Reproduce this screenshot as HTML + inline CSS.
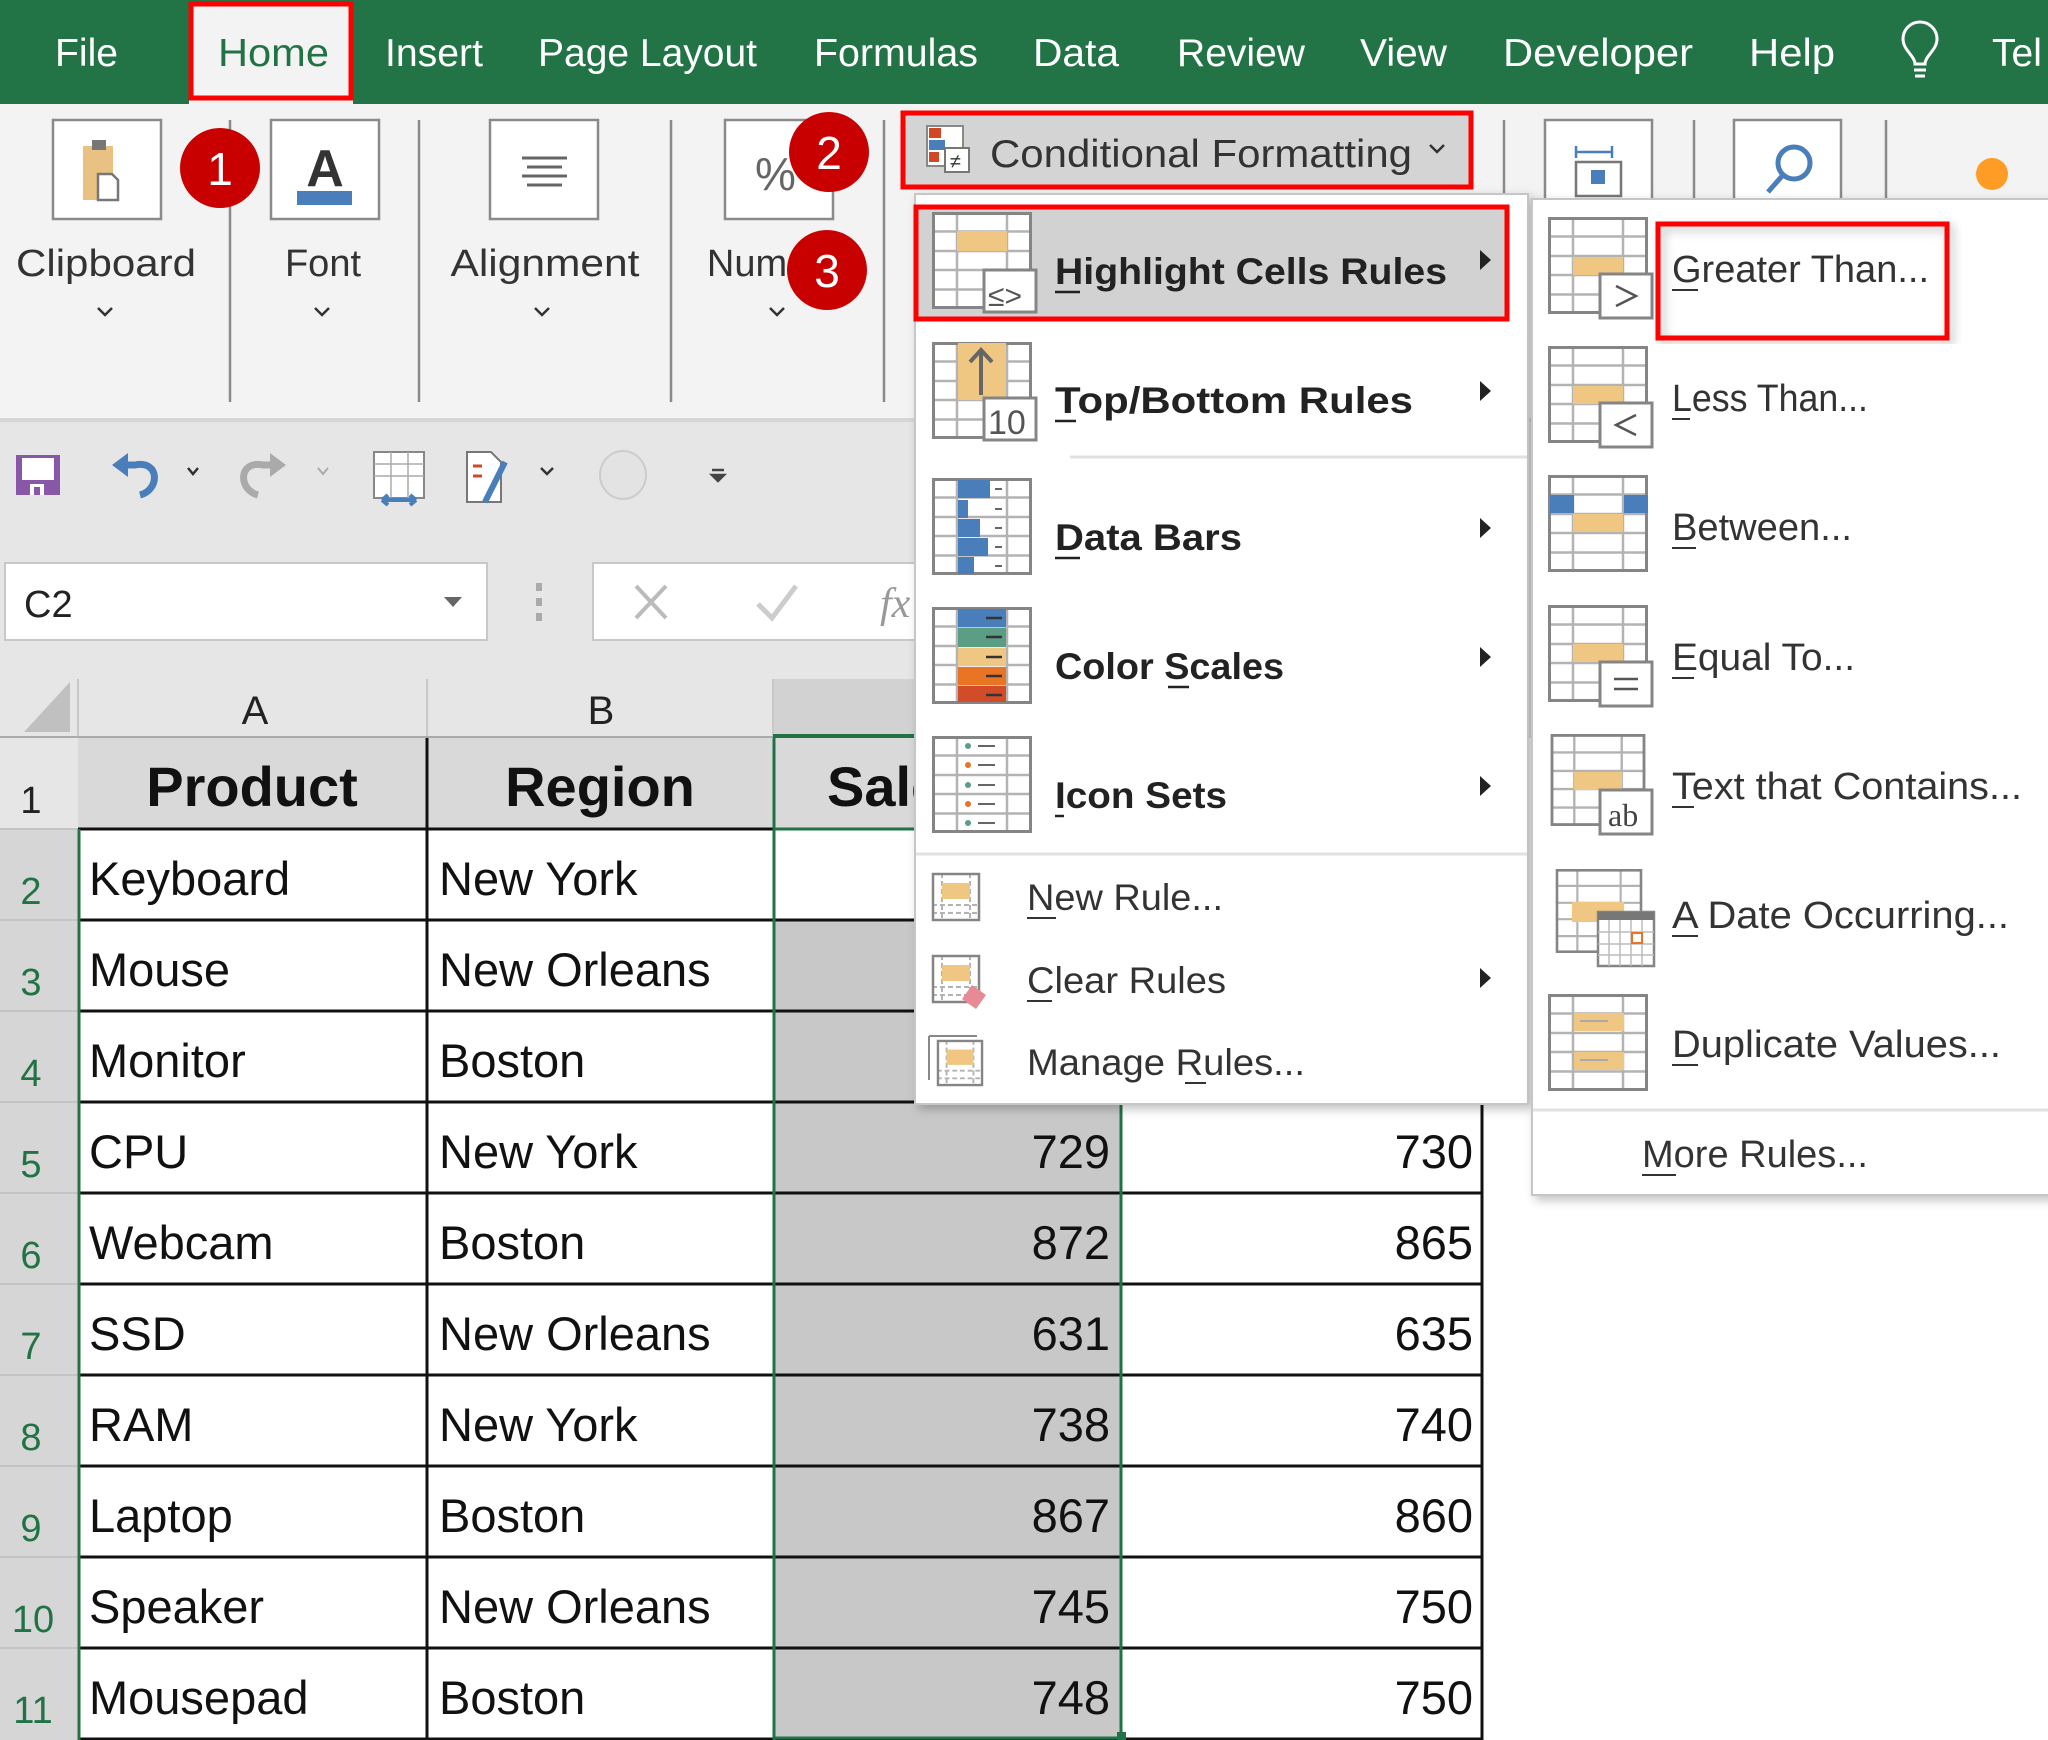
<!DOCTYPE html>
<html><head><meta charset="utf-8"><style>
html,body{margin:0;padding:0;background:#fff;}
svg{display:block;font-family:"Liberation Sans",Arial,sans-serif;}
</style></head><body>
<svg width="2048" height="1740" viewBox="0 0 2048 1740" xmlns="http://www.w3.org/2000/svg">
<defs>
<symbol id="g" viewBox="0 0 100 97" overflow="visible">
<rect x="0" y="0" width="100" height="97" fill="#fff"/>
<g stroke="#b3b3b3" stroke-width="2.5"><line x1="25" y1="0" x2="25" y2="97"/><line x1="75" y1="0" x2="75" y2="97"/><line x1="0" y1="19.5" x2="100" y2="19.5"/><line x1="0" y1="39" x2="100" y2="39"/><line x1="0" y1="58" x2="100" y2="58"/><line x1="0" y1="77.5" x2="100" y2="77.5"/></g>
<rect x="1.5" y="1.5" width="97" height="94" fill="none" stroke="#858585" stroke-width="3"/>
</symbol>
<symbol id="sg" viewBox="0 0 48 48" overflow="visible">
<rect x="0" y="0" width="48" height="48" fill="#fff"/>
<g stroke="#b3b3b3" stroke-width="2" stroke-dasharray="5 3"><line x1="10" y1="0" x2="10" y2="48"/><line x1="38" y1="0" x2="38" y2="48"/><line x1="0" y1="32" x2="48" y2="32"/><line x1="0" y1="40" x2="48" y2="40"/></g>
<rect x="1" y="1" width="46" height="46" fill="none" stroke="#858585" stroke-width="2.5"/>
<rect x="10" y="10" width="28" height="16" fill="#efc783"/>
</symbol>
<filter id="sh" x="-5%" y="-5%" width="110%" height="110%"><feDropShadow dx="4" dy="4" stdDeviation="5" flood-color="#000" flood-opacity="0.25"/></filter>
</defs>

<rect x="0" y="0" width="2048" height="104" fill="#227447"/>
<rect x="189" y="3" width="164" height="101" fill="#f3f3f3"/>
<rect x="191" y="4" width="160" height="94" fill="none" stroke="#ff0000" stroke-width="5"/>
<g fill="#fff" font-size="39">
<text x="55" y="66" textLength="63" lengthAdjust="spacingAndGlyphs">File</text>
<text x="218" y="66" fill="#217346" textLength="111" lengthAdjust="spacingAndGlyphs">Home</text>
<text x="385" y="66" textLength="98" lengthAdjust="spacingAndGlyphs">Insert</text>
<text x="538" y="66" textLength="219" lengthAdjust="spacingAndGlyphs">Page Layout</text>
<text x="814" y="66" textLength="164" lengthAdjust="spacingAndGlyphs">Formulas</text>
<text x="1033" y="66" textLength="86" lengthAdjust="spacingAndGlyphs">Data</text>
<text x="1177" y="66" textLength="128" lengthAdjust="spacingAndGlyphs">Review</text>
<text x="1360" y="66" textLength="87" lengthAdjust="spacingAndGlyphs">View</text>
<text x="1503" y="66" textLength="190" lengthAdjust="spacingAndGlyphs">Developer</text>
<text x="1749" y="66" textLength="86" lengthAdjust="spacingAndGlyphs">Help</text>
<text x="1992" y="66">Tel</text>
</g>
<g fill="none" stroke="#fff" stroke-width="3">
<path d="M1915 64 C1915 56 1903 50 1903 39 A17 17 0 1 1 1937 39 C1937 50 1925 56 1925 64 Z"/>
<line x1="1914" y1="70" x2="1926" y2="70"/><line x1="1915" y1="76" x2="1925" y2="76"/>
</g>

<rect x="0" y="104" width="2048" height="314" fill="#f3f3f3"/>
<g fill="#fff" stroke="#8a8a8a" stroke-width="2.5">
<rect x="53" y="120" width="108" height="99"/>
<rect x="271" y="120" width="108" height="99"/>
<rect x="490" y="120" width="108" height="99"/>
<rect x="725" y="120" width="108" height="99"/>
<rect x="1545" y="120" width="107" height="90"/>
<rect x="1734" y="120" width="107" height="90"/>
</g>
<rect x="83" y="146" width="30" height="54" fill="#e9c283"/>
<rect x="92" y="140" width="14" height="10" fill="#777"/>
<path d="M98 174 h14 l6 6 v20 h-20z" fill="#fff" stroke="#777" stroke-width="2.5"/>
<text x="325" y="186" font-size="52" font-weight="bold" text-anchor="middle" fill="#333">A</text>
<rect x="297" y="191" width="55" height="14" fill="#4a7ebb"/>
<g stroke="#666" stroke-width="3"><line x1="522" y1="158" x2="567" y2="158"/><line x1="527" y1="167" x2="562" y2="167"/><line x1="522" y1="176" x2="567" y2="176"/><line x1="527" y1="185" x2="562" y2="185"/></g>
<text x="755" y="190" font-size="46" fill="#666">%</text>
<g fill="#333" font-size="38" text-anchor="middle">
<text x="106" y="276" textLength="180" lengthAdjust="spacingAndGlyphs">Clipboard</text>
<text x="323" y="276">Font</text>
<text x="545" y="276" textLength="189" lengthAdjust="spacingAndGlyphs">Alignment</text>
<text x="747" y="276">Num</text>
</g>
<g fill="none" stroke="#333" stroke-width="2.5"><path d="M98 308l7 7 7-7"/><path d="M315 308l7 7 7-7"/><path d="M535 308l7 7 7-7"/><path d="M770 308l7 7 7-7"/></g>
<g stroke="#8a8a8a" stroke-width="2.5"><line x1="230" y1="120" x2="230" y2="402"/><line x1="419" y1="120" x2="419" y2="402"/><line x1="671" y1="120" x2="671" y2="402"/><line x1="884" y1="120" x2="884" y2="402"/><line x1="1504" y1="120" x2="1504" y2="210"/><line x1="1694" y1="120" x2="1694" y2="210"/><line x1="1886" y1="120" x2="1886" y2="210"/></g>
<g stroke="#4a7ebb" stroke-width="2.5"><line x1="1576" y1="152" x2="1612" y2="152"/><line x1="1576" y1="146" x2="1576" y2="158"/><line x1="1612" y1="146" x2="1612" y2="158"/></g>
<rect x="1576" y="162" width="45" height="34" fill="#fff" stroke="#777" stroke-width="2.5"/>
<rect x="1591" y="170" width="14" height="14" fill="#4a7ebb"/>
<circle cx="1794" cy="163" r="16" fill="none" stroke="#4a7ebb" stroke-width="5"/>
<line x1="1783" y1="175" x2="1768" y2="192" stroke="#4a7ebb" stroke-width="5"/>
<circle cx="1992" cy="174" r="16" fill="#ff8c00" opacity="0.85"/>

<rect x="904" y="114" width="566" height="72" fill="#d4d4d4"/>
<rect x="903" y="113" width="568" height="74" fill="none" stroke="#ff0000" stroke-width="5"/>
<g transform="translate(927,126)"><rect x="0" y="0" width="36" height="40" fill="#fff" stroke="#888" stroke-width="2"/><rect x="2" y="2" width="12" height="10" fill="#d24726"/><rect x="2" y="14" width="16" height="10" fill="#4a7ebb"/><rect x="2" y="26" width="10" height="10" fill="#d24726"/><rect x="18" y="22" width="24" height="24" fill="#fff" stroke="#777" stroke-width="2"/><text x="23" y="42" font-size="20" fill="#333">≠</text></g>
<text x="990" y="167" font-size="39" fill="#333" textLength="422" lengthAdjust="spacingAndGlyphs">Conditional Formatting</text>
<path d="M1430 145l7 7 7-7" fill="none" stroke="#333" stroke-width="2.5"/>

<rect x="0" y="418" width="2048" height="262" fill="#e6e6e6"/>
<rect x="0" y="418" width="2048" height="4" fill="#d6d6d6"/>
<rect x="16" y="455" width="44" height="40" fill="#8857a8"/><rect x="22" y="458" width="32" height="22" fill="#fff"/><rect x="30" y="484" width="14" height="11" fill="#fff"/><rect x="34" y="487" width="6" height="8" fill="#8857a8"/>
<path d="M140 495 C160 490 160 460 135 465 L122 465" fill="none" stroke="#4a7ebb" stroke-width="7"/><path d="M112 465 l16 -12 v24z" fill="#4a7ebb"/>
<path d="M188 468l5 6 5-6" fill="none" stroke="#333" stroke-width="2.5"/>
<path d="M258 495 C238 490 238 460 263 465 L276 465" fill="none" stroke="#aaa" stroke-width="7"/><path d="M286 465 l-16 -12 v24z" fill="#aaa"/>
<path d="M318 468l5 6 5-6" fill="none" stroke="#aaa" stroke-width="2"/>
<rect x="374" y="452" width="50" height="46" fill="#fff" stroke="#888" stroke-width="2"/>
<g stroke="#aaa" stroke-width="1.5"><line x1="374" y1="464" x2="424" y2="464"/><line x1="374" y1="476" x2="424" y2="476"/><line x1="391" y1="452" x2="391" y2="498"/><line x1="408" y1="452" x2="408" y2="498"/></g>
<path d="M382 500 h34 M382 500 l6 -5 M382 500 l6 5 M416 500 l-6 -5 M416 500 l-6 5" stroke="#4a7ebb" stroke-width="4" fill="none"/>
<path d="M467 452 h24 l10 10 v40 h-34z" fill="#fff" stroke="#777" stroke-width="2"/>
<g stroke="#d24726" stroke-width="3"><line x1="473" y1="466" x2="482" y2="466"/><line x1="473" y1="476" x2="482" y2="476"/></g>
<line x1="505" y1="462" x2="485" y2="502" stroke="#4a7ebb" stroke-width="6"/>
<path d="M541 468l6 6 6-6" fill="none" stroke="#333" stroke-width="2.5"/>
<ellipse cx="623" cy="475" rx="23" ry="24" fill="#e3e3e3" stroke="#ccc" stroke-width="2"/>
<path d="M712 470h12M712 475l6 6 6-6z" stroke="#444" stroke-width="2.5" fill="#444"/>

<rect x="5" y="563" width="482" height="77" fill="#fff" stroke="#c8c8c8" stroke-width="2"/>
<text x="24" y="617" font-size="38" fill="#222">C2</text>
<path d="M444 597h18l-9 10z" fill="#666"/>
<g fill="#aaa"><rect x="536" y="583" width="6" height="8"/><rect x="536" y="598" width="6" height="8"/><rect x="536" y="613" width="6" height="8"/></g>
<rect x="593" y="563" width="400" height="77" fill="#fff" stroke="#c8c8c8" stroke-width="2"/>
<path d="M636 586l30 32M666 586l-30 32" stroke="#bbb" stroke-width="4"/>
<path d="M758 604l14 14 24-32" fill="none" stroke="#ccc" stroke-width="5"/>
<text x="880" y="617" font-size="42" font-style="italic" font-family="Liberation Serif,serif" fill="#999">fx</text>

<rect x="0" y="679" width="2048" height="59" fill="#e6e6e6"/>
<rect x="773" y="679" width="350" height="59" fill="#d2d2d2"/>
<path d="M70 682 v50 h-46z" fill="#c0c0c0"/>
<g stroke="#c8c8c8" stroke-width="2"><line x1="78" y1="679" x2="78" y2="738"/><line x1="427" y1="679" x2="427" y2="738"/><line x1="773" y1="679" x2="773" y2="738"/></g>
<g font-size="40" fill="#222" text-anchor="middle"><text x="255" y="724">A</text><text x="601" y="724">B</text></g>
<rect x="773" y="734" width="350" height="5" fill="#217346"/>
<rect x="0" y="736" width="773" height="3" fill="#aaa"/>

<rect x="0" y="738" width="78" height="1002" fill="#e6e6e6"/>
<rect x="0" y="829" width="78" height="911" fill="#d6d6d6"/>
<g stroke="#c4c4c4" stroke-width="2">
<line x1="0" y1="829" x2="78" y2="829"/><line x1="0" y1="920" x2="78" y2="920"/><line x1="0" y1="1011" x2="78" y2="1011"/><line x1="0" y1="1102" x2="78" y2="1102"/><line x1="0" y1="1193" x2="78" y2="1193"/><line x1="0" y1="1284" x2="78" y2="1284"/><line x1="0" y1="1375" x2="78" y2="1375"/><line x1="0" y1="1466" x2="78" y2="1466"/><line x1="0" y1="1557" x2="78" y2="1557"/><line x1="0" y1="1648" x2="78" y2="1648"/>
</g>
<g font-size="38" text-anchor="middle" fill="#217346">
<text x="31" y="813" fill="#222">1</text>
<text x="31" y="904">2</text><text x="31" y="995">3</text><text x="31" y="1086">4</text><text x="31" y="1177">5</text><text x="31" y="1268">6</text><text x="31" y="1359">7</text><text x="31" y="1450">8</text><text x="31" y="1541">9</text><text x="33" y="1632">10</text><text x="33" y="1723">11</text>
</g>

<rect x="78" y="738" width="1045" height="91" fill="#d9d9d9"/>
<rect x="78" y="829" width="1404" height="911" fill="#fff"/>
<rect x="775" y="920" width="346" height="820" fill="#c8c8c8"/>
<g stroke="#111" stroke-width="3">
<line x1="78" y1="829" x2="1482" y2="829"/><line x1="78" y1="920" x2="1482" y2="920"/><line x1="78" y1="1011" x2="1482" y2="1011"/><line x1="78" y1="1102" x2="1482" y2="1102"/><line x1="78" y1="1193" x2="1482" y2="1193"/><line x1="78" y1="1284" x2="1482" y2="1284"/><line x1="78" y1="1375" x2="1482" y2="1375"/><line x1="78" y1="1466" x2="1482" y2="1466"/><line x1="78" y1="1557" x2="1482" y2="1557"/><line x1="78" y1="1648" x2="1482" y2="1648"/><line x1="78" y1="1739" x2="1482" y2="1739"/>
<line x1="427" y1="738" x2="427" y2="1740"/><line x1="1482" y1="829" x2="1482" y2="1740"/>
</g>
<g stroke="#217346" stroke-width="3"><line x1="79" y1="829" x2="79" y2="1740"/><line x1="774" y1="738" x2="774" y2="1740"/><line x1="1121" y1="829" x2="1121" y2="1740"/><line x1="773" y1="829" x2="1123" y2="829"/><line x1="773" y1="1738" x2="1123" y2="1738"/></g>
<rect x="1117" y="1732" width="9" height="8" fill="#217346"/>
<g font-size="56" font-weight="bold" fill="#111" text-anchor="middle"><text x="252" y="806">Product</text><text x="600" y="806">Region</text></g>
<text x="827" y="806" font-size="56" font-weight="bold" fill="#111">Sales</text>
<g font-size="47" fill="#111">
<text x="89" y="895">Keyboard</text><text x="439" y="895">New York</text>
<text x="89" y="986">Mouse</text><text x="439" y="986">New Orleans</text>
<text x="89" y="1077">Monitor</text><text x="439" y="1077">Boston</text>
<text x="89" y="1168">CPU</text><text x="439" y="1168">New York</text>
<text x="89" y="1259">Webcam</text><text x="439" y="1259">Boston</text>
<text x="89" y="1350">SSD</text><text x="439" y="1350">New Orleans</text>
<text x="89" y="1441">RAM</text><text x="439" y="1441">New York</text>
<text x="89" y="1532">Laptop</text><text x="439" y="1532">Boston</text>
<text x="89" y="1623">Speaker</text><text x="439" y="1623">New Orleans</text>
<text x="89" y="1714">Mousepad</text><text x="439" y="1714">Boston</text>
</g>
<g font-size="47" fill="#111" text-anchor="end">
<text x="1110" y="1168">729</text><text x="1473" y="1168">730</text>
<text x="1110" y="1259">872</text><text x="1473" y="1259">865</text>
<text x="1110" y="1350">631</text><text x="1473" y="1350">635</text>
<text x="1110" y="1441">738</text><text x="1473" y="1441">740</text>
<text x="1110" y="1532">867</text><text x="1473" y="1532">860</text>
<text x="1110" y="1623">745</text><text x="1473" y="1623">750</text>
<text x="1110" y="1714">748</text><text x="1473" y="1714">750</text>
</g>

<g fill="#c80000">
<circle cx="220" cy="168" r="40"/><circle cx="829" cy="152" r="40"/><circle cx="827" cy="270" r="40"/><circle cx="1943" cy="439" r="40"/>
</g>
<g fill="#fff" font-size="46" text-anchor="middle"><text x="220" y="185">1</text><text x="829" y="169">2</text><text x="827" y="287">3</text><text x="1943" y="456" font-weight="bold">4</text></g>

<rect x="915" y="194" width="613" height="910" fill="#fff" stroke="#c6c6c6" stroke-width="2" filter="url(#sh)"/>
<rect x="917" y="208" width="589" height="111" fill="#d2d2d2"/>
<rect x="916" y="207" width="591" height="112" fill="none" stroke="#ff0000" stroke-width="5"/>
<line x1="1070" y1="457" x2="1527" y2="457" stroke="#e1e1e1" stroke-width="3"/>
<line x1="916" y1="854" x2="1527" y2="854" stroke="#e1e1e1" stroke-width="3"/>
<use href="#g" x="932" y="212" width="100" height="97"/>
<rect x="957" y="231" width="50" height="20" fill="#efc783"/>
<rect x="984" y="270" width="52" height="42" fill="#fff" stroke="#858585" stroke-width="3"/>
<text x="988" y="306" font-size="30" fill="#555">≤&gt;</text>
<use href="#g" x="932" y="342" width="100" height="97"/>
<rect x="958" y="343" width="48" height="57" fill="#efc783"/>
<path d="M981 395 V350 M970 362 l11 -12 11 12" stroke="#666" stroke-width="4" fill="none"/>
<rect x="984" y="398" width="52" height="42" fill="#fff" stroke="#858585" stroke-width="3"/>
<text x="988" y="434" font-size="34" fill="#555">10</text>
<use href="#g" x="932" y="478" width="100" height="97"/>
<g fill="#4a7ebb"><rect x="958" y="480" width="32" height="18"/><rect x="958" y="500" width="10" height="18"/><rect x="958" y="519" width="22" height="18"/><rect x="958" y="538" width="30" height="18"/><rect x="958" y="557" width="16" height="17"/></g>
<g stroke="#666" stroke-width="2"><line x1="995" y1="489" x2="1002" y2="489"/><line x1="995" y1="509" x2="1002" y2="509"/><line x1="995" y1="528" x2="1002" y2="528"/><line x1="995" y1="547" x2="1002" y2="547"/><line x1="995" y1="566" x2="1002" y2="566"/></g>
<use href="#g" x="932" y="607" width="100" height="97"/>
<rect x="958" y="609" width="48" height="18" fill="#4a7ebb"/><rect x="958" y="628" width="48" height="19" fill="#5a9e86"/><rect x="958" y="648" width="48" height="18" fill="#efc783"/><rect x="958" y="667" width="48" height="18" fill="#e97424"/><rect x="958" y="686" width="48" height="16" fill="#d24c2a"/>
<g stroke="#333" stroke-width="2.5"><line x1="986" y1="618" x2="1002" y2="618"/><line x1="986" y1="637" x2="1002" y2="637"/><line x1="986" y1="657" x2="1002" y2="657"/><line x1="986" y1="676" x2="1002" y2="676"/><line x1="986" y1="695" x2="1002" y2="695"/></g>
<use href="#g" x="932" y="736" width="100" height="97"/>
<g><circle cx="968" cy="746" r="3" fill="#5a9e86"/><circle cx="968" cy="765" r="3" fill="#e97424"/><circle cx="968" cy="785" r="3" fill="#5a9e86"/><circle cx="968" cy="804" r="3" fill="#e97424"/><circle cx="968" cy="823" r="3" fill="#5a9e86"/></g>
<g stroke="#666" stroke-width="2"><line x1="978" y1="746" x2="995" y2="746"/><line x1="978" y1="765" x2="995" y2="765"/><line x1="978" y1="785" x2="995" y2="785"/><line x1="978" y1="804" x2="995" y2="804"/><line x1="978" y1="823" x2="995" y2="823"/></g>
<use href="#sg" x="932" y="873" width="48" height="48"/>
<use href="#sg" x="932" y="955" width="48" height="48"/>
<path d="M972 985 l14 10 -10 14 -14 -10z" fill="#e88a95"/>
<path d="M929 1036 h48" stroke="#888" stroke-width="2"/><path d="M929 1036 v44" stroke="#888" stroke-width="2"/>
<use href="#sg" x="935" y="1040" width="50" height="46"/>
<g font-size="37" font-weight="bold" fill="#222">
<text x="1055" y="284" textLength="392" lengthAdjust="spacingAndGlyphs">Highlight Cells Rules</text>
<text x="1055" y="413" textLength="358" lengthAdjust="spacingAndGlyphs">Top/Bottom Rules</text>
<text x="1055" y="550" textLength="187" lengthAdjust="spacingAndGlyphs">Data Bars</text>
<text x="1055" y="679" textLength="229" lengthAdjust="spacingAndGlyphs">Color Scales</text>
<text x="1055" y="808" textLength="172" lengthAdjust="spacingAndGlyphs">Icon Sets</text>
</g>
<g stroke="#222" stroke-width="2.5"><line x1="1055" y1="292" x2="1080" y2="292"/><line x1="1055" y1="421" x2="1076" y2="421"/><line x1="1055" y1="558" x2="1080" y2="558"/><line x1="1168" y1="687" x2="1189" y2="687"/><line x1="1055" y1="816" x2="1064" y2="816"/></g>
<g fill="#222"><path d="M1480 250l11 10-11 10z"/><path d="M1480 381l11 10-11 10z"/><path d="M1480 518l11 10-11 10z"/><path d="M1480 647l11 10-11 10z"/><path d="M1480 776l11 10-11 10z"/><path d="M1480 968l11 10-11 10z"/></g>
<g font-size="37" fill="#333">
<text x="1027" y="910" textLength="196" lengthAdjust="spacingAndGlyphs">New Rule...</text>
<text x="1027" y="993" textLength="199" lengthAdjust="spacingAndGlyphs">Clear Rules</text>
<text x="1027" y="1075" textLength="278" lengthAdjust="spacingAndGlyphs">Manage Rules...</text>
</g>
<g stroke="#333" stroke-width="2"><line x1="1027" y1="918" x2="1056" y2="918"/><line x1="1027" y1="1001" x2="1052" y2="1001"/><line x1="1185" y1="1083" x2="1206" y2="1083"/></g>

<rect x="1532" y="199" width="530" height="996" fill="#fff" stroke="#c6c6c6" stroke-width="2" filter="url(#sh)"/>
<line x1="1533" y1="1110" x2="2048" y2="1110" stroke="#e1e1e1" stroke-width="3"/>
<rect x="1658" y="224" width="289" height="114" fill="none" stroke="#ff0000" stroke-width="5" filter="url(#sh)"/>
<use href="#g" x="1548" y="217" width="100" height="97"/>
<rect x="1573" y="257" width="50" height="18" fill="#efc783"/>
<rect x="1600" y="274" width="52" height="44" fill="#fff" stroke="#858585" stroke-width="3"/>
<path d="M1616 286 l20 10 -20 10" fill="none" stroke="#555" stroke-width="2.5"/>
<use href="#g" x="1548" y="346" width="100" height="97"/>
<rect x="1573" y="386" width="50" height="18" fill="#efc783"/>
<rect x="1600" y="403" width="52" height="44" fill="#fff" stroke="#858585" stroke-width="3"/>
<path d="M1636 415 l-20 10 20 10" fill="none" stroke="#555" stroke-width="2.5"/>
<use href="#g" x="1548" y="475" width="100" height="97"/>
<rect x="1550" y="495" width="24" height="18" fill="#4a7ebb"/><rect x="1624" y="495" width="24" height="18" fill="#4a7ebb"/>
<rect x="1573" y="514" width="50" height="18" fill="#efc783"/>
<use href="#g" x="1548" y="605" width="100" height="97"/>
<rect x="1573" y="644" width="50" height="18" fill="#efc783"/>
<rect x="1600" y="662" width="52" height="44" fill="#fff" stroke="#858585" stroke-width="3"/>
<g stroke="#555" stroke-width="2.5"><line x1="1614" y1="679" x2="1638" y2="679"/><line x1="1614" y1="689" x2="1638" y2="689"/></g>
<use href="#g" x="1550" y="734" width="96" height="92"/>
<rect x="1574" y="772" width="48" height="18" fill="#efc783"/>
<rect x="1600" y="790" width="52" height="44" fill="#fff" stroke="#858585" stroke-width="3"/>
<text x="1608" y="826" font-size="32" font-family="Liberation Serif,serif" fill="#444">ab</text>
<use href="#g" x="1550" y="869" width="98" height="84"/>
<rect x="1572" y="902" width="52" height="20" fill="#efc783"/>
<rect x="1598" y="912" width="56" height="54" fill="#fff" stroke="#858585" stroke-width="2.5"/>
<rect x="1598" y="912" width="56" height="8" fill="#777"/>
<g stroke="#bbb" stroke-width="1.5"><line x1="1598" y1="932" x2="1654" y2="932"/><line x1="1598" y1="944" x2="1654" y2="944"/><line x1="1598" y1="955" x2="1654" y2="955"/><line x1="1609" y1="920" x2="1609" y2="966"/><line x1="1620" y1="920" x2="1620" y2="966"/><line x1="1631" y1="920" x2="1631" y2="966"/><line x1="1642" y1="920" x2="1642" y2="966"/></g>
<rect x="1632" y="933" width="10" height="10" fill="none" stroke="#e97424" stroke-width="2"/>
<use href="#g" x="1548" y="994" width="100" height="97"/>
<rect x="1574" y="1013" width="50" height="18" fill="#efc783"/><rect x="1574" y="1052" width="50" height="18" fill="#efc783"/>
<g stroke="#aaa" stroke-width="2"><line x1="1580" y1="1021" x2="1608" y2="1021"/><line x1="1580" y1="1060" x2="1608" y2="1060"/></g>
<g font-size="38" fill="#333">
<text x="1672" y="282" textLength="257" lengthAdjust="spacingAndGlyphs">Greater Than...</text>
<text x="1672" y="411" textLength="196" lengthAdjust="spacingAndGlyphs">Less Than...</text>
<text x="1672" y="540" textLength="180" lengthAdjust="spacingAndGlyphs">Between...</text>
<text x="1672" y="670" textLength="183" lengthAdjust="spacingAndGlyphs">Equal To...</text>
<text x="1672" y="799" textLength="350" lengthAdjust="spacingAndGlyphs">Text that Contains...</text>
<text x="1672" y="928" textLength="337" lengthAdjust="spacingAndGlyphs">A Date Occurring...</text>
<text x="1672" y="1057" textLength="329" lengthAdjust="spacingAndGlyphs">Duplicate Values...</text>
<text x="1642" y="1167" textLength="226" lengthAdjust="spacingAndGlyphs">More Rules...</text>
</g>
<g stroke="#333" stroke-width="2"><line x1="1672" y1="290" x2="1698" y2="290"/><line x1="1672" y1="419" x2="1690" y2="419"/><line x1="1672" y1="548" x2="1696" y2="548"/><line x1="1672" y1="678" x2="1694" y2="678"/><line x1="1672" y1="807" x2="1694" y2="807"/><line x1="1672" y1="936" x2="1698" y2="936"/><line x1="1672" y1="1065" x2="1698" y2="1065"/><line x1="1642" y1="1175" x2="1676" y2="1175"/></g>
</svg>
</body></html>
